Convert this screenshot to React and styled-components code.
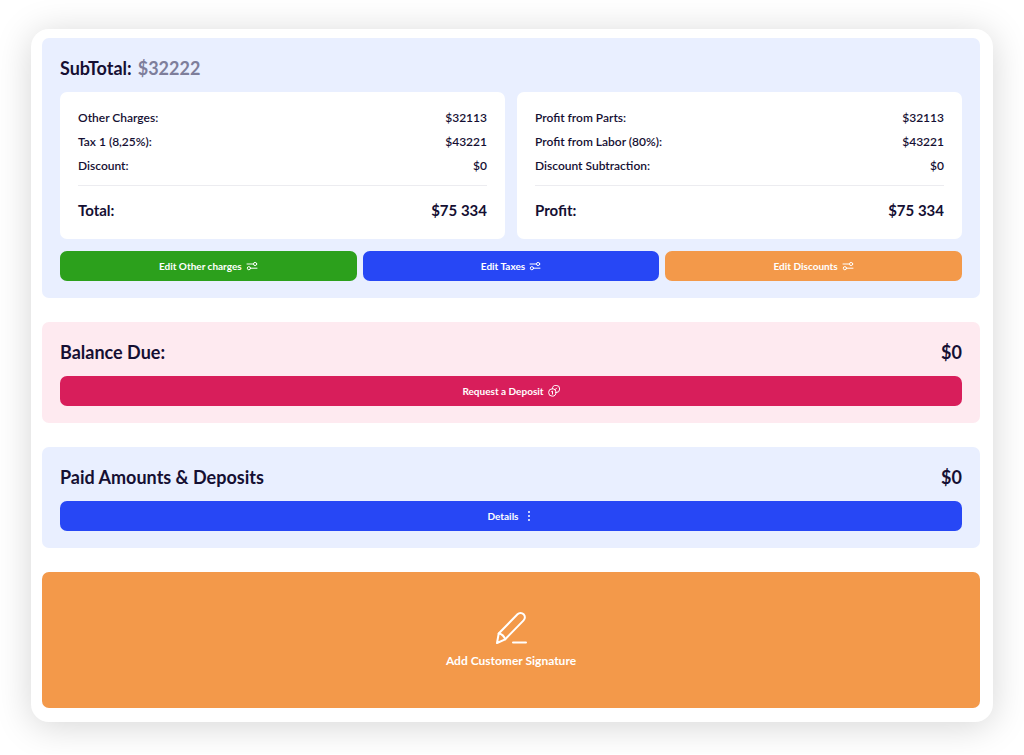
import React from "react";
import styled, { createGlobalStyle } from "styled-components";

const GlobalStyle = createGlobalStyle`
    *{
        box-sizing: border-box;
    }
    body{
        margin: 0;
        background: #fff;
        color: #150f33;
        font-family: Lato, "Noto Sans", sans-serif;
    }
    h2,p,dl,dd{
        margin: 0;
    }
`

const StyledPage = styled.div`
    padding: 29px 31px 32px;
`
const StyledCard = styled.main`
    display: grid;
    gap: 24px;
    padding: 9px 13px 14px 11px;
    border-radius: 18px;
    background: #fff;
    box-shadow: 0 4px 36px rgba(0, 0, 0, 0.17);
`

const panelColors = {
    blue: '#e9efff',
    pink: '#feeaf0',
}
const StyledPanel = styled.section`
    display: grid;
    gap: 12px;
    padding: 18px 18px 17px;
    border-radius: 7px;
    background: ${({ $color }) => panelColors[$color]};
`
const StyledHeader = styled.header`
    display: flex;
    justify-content: ${({ $spread }) => $spread ? 'space-between' : 'flex-start'};
    gap: 6px;
    font-size: 18px;
    font-weight: 700;
    line-height: 24px;
`
const StyledTitle = styled.h2`
    font-size: inherit;
    font-weight: inherit;
`
const StyledAmount = styled.p`
    color: ${({ $muted }) => $muted ? '#7e7e9b' : 'inherit'};
`

const StyledColumns = styled.div`
    display: grid;
    grid-template-columns: repeat(${({ $cols }) => $cols}, 1fr);
    gap: ${({ $gap }) => $gap};
`
const StyledSummary = styled.dl`
    display: grid;
    gap: 6px;
    padding: 17px 18px;
    border-radius: 7px;
    background: #fff;
`
const StyledRow = styled.div`
    display: flex;
    justify-content: space-between;
    font-size: 12px;
    font-weight: 600;
    line-height: 18px;
`
const StyledTotal = styled(StyledRow)`
    margin-top: 4px;
    padding-top: 12px;
    border-top: 1px solid #ececf0;
    font-size: 15px;
    font-weight: 700;
    line-height: 24px;
`

const buttonColors = {
    green: '#2ca01c',
    blue: '#2747f5',
    orange: '#f3994a',
    red: '#d81e5b',
}
const StyledButton = styled.button`
    display: flex;
    align-items: center;
    justify-content: center;
    gap: 4px;
    height: 30px;
    padding: 0;
    border: 0;
    border-radius: 7px;
    background: ${({ $color }) => buttonColors[$color]};
    color: #fff;
    font: 700 10px/16px Lato, "Noto Sans", sans-serif;
    cursor: pointer;
`
const StyledSignature = styled(StyledButton)`
    flex-direction: column;
    gap: 6px;
    height: auto;
    padding: 38px 18px;
    font-size: 12px;
    line-height: 18px;
`

const StyledIcon = styled.svg`
    width: ${({ $size }) => $size}px;
    height: ${({ $size }) => $size}px;
    fill: none;
    stroke: currentColor;
    stroke-linecap: round;
    stroke-linejoin: round;
`

const SlidersIcon = () => (
    <StyledIcon $size={12} viewBox="0 0 12 12" aria-hidden="true">
        <path d="M1 4h6.2M4.8 8.2H11" />
        <circle cx="9.1" cy="4" r="1.6" />
        <circle cx="2.9" cy="8.2" r="1.6" />
    </StyledIcon>
)

const CoinsIcon = () => (
    <StyledIcon $size={12} viewBox="0 0 12 12" aria-hidden="true">
        <circle cx="4.3" cy="7.5" r="3.7" />
        <path d="M4.3 3.8a3.7 3.7 0 1 1 3.7 3.9M3.6 6.6l.9-.5v3" />
        <path d="M6.8 4.9l1.8-1.8" />
    </StyledIcon>
)

const DotsIcon = () => (
    <StyledIcon $size={12} viewBox="0 0 12 12" aria-hidden="true">
        <path d="M6 2v.01M6 6v.01M6 10v.01" strokeWidth="2" />
    </StyledIcon>
)

const PenIcon = () => (
    <StyledIcon $size={36} viewBox="0 0 36 36" strokeWidth="2" aria-hidden="true">
        <path d="M4 33l1.700-9.500L24.500 4.300a4.300 4.300 0 0 1 6.100 0a4.300 4.300 0 0 1 0 6.100L12.200 29.300z" />
        <path d="M5.700 23.500q4.800.8 6.500 5.800M20 32.500h13" />
    </StyledIcon>
)

const charges = {
    rows: [
        ['Other Charges:', '$32113'],
        ['Tax 1 (8,25%):', '$43221'],
        ['Discount:', '$0'],
    ],
    total: ['Total:', '$75 334'],
}

const profit = {
    rows: [
        ['Profit from Parts:', '$32113'],
        ['Profit from Labor (80%):', '$43221'],
        ['Discount Subtraction:', '$0'],
    ],
    total: ['Profit:', '$75 334'],
}

function Summary({ rows, total }) {
    return <StyledSummary>
        {
            rows.map(([label, value]) => <StyledRow key={label}>
                <dt>{label}</dt>
                <dd>{value}</dd>
            </StyledRow>)
        }
        <StyledTotal>
            <dt>{total[0]}</dt>
            <dd>{total[1]}</dd>
        </StyledTotal>
    </StyledSummary>
}

function Panel({ color, title, amount, muted, children }) {
    return <StyledPanel $color={color}>
        <StyledHeader $spread={!muted}>
            <StyledTitle>{title}</StyledTitle>
            <StyledAmount $muted={muted}>{amount}</StyledAmount>
        </StyledHeader>
        {children}
    </StyledPanel>
}

export default function App() {
    return <>
        <GlobalStyle />
        <StyledPage>
            <StyledCard>
                <Panel color="blue" title="SubTotal:" amount="$32222" muted>
                    <StyledColumns $cols={2} $gap="12px">
                        <Summary {...charges} />
                        <Summary {...profit} />
                    </StyledColumns>
                    <StyledColumns $cols={3} $gap="6px">
                        <StyledButton type="button" $color="green">Edit Other charges <SlidersIcon /></StyledButton>
                        <StyledButton type="button" $color="blue">Edit Taxes <SlidersIcon /></StyledButton>
                        <StyledButton type="button" $color="orange">Edit Discounts <SlidersIcon /></StyledButton>
                    </StyledColumns>
                </Panel>
                <Panel color="pink" title="Balance Due:" amount="$0">
                    <StyledButton type="button" $color="red">Request a Deposit <CoinsIcon /></StyledButton>
                </Panel>
                <Panel color="blue" title="Paid Amounts & Deposits" amount="$0">
                    <StyledButton type="button" $color="blue">Details <DotsIcon /></StyledButton>
                </Panel>
                <StyledSignature type="button" $color="orange">
                    <PenIcon />
                    Add Customer Signature
                </StyledSignature>
            </StyledCard>
        </StyledPage>
    </>
}
